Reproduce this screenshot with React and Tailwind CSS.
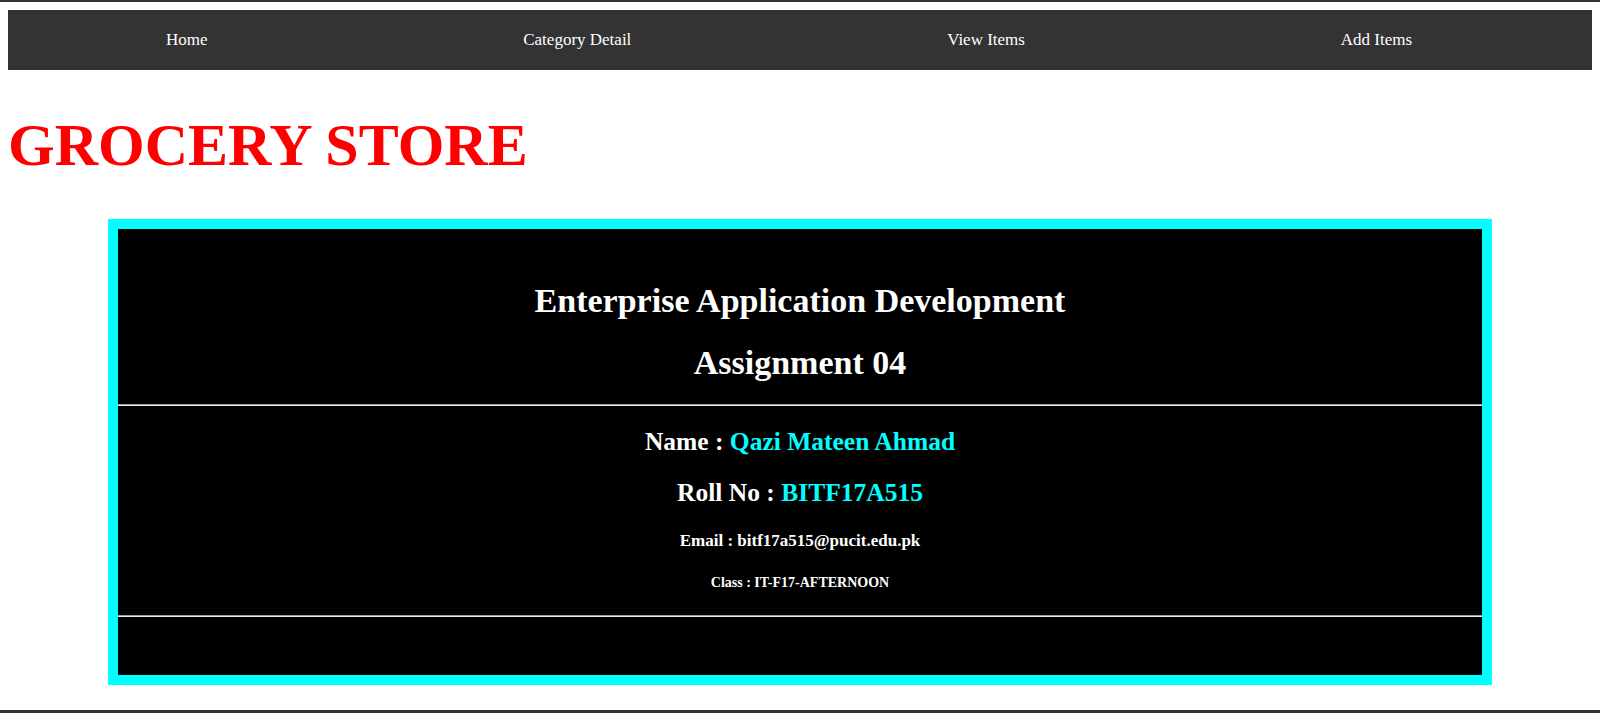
import React from "react";

const links = ["Home", "Category Detail", "View Items", "Add Items"];

const Divider = () => (
  <div className="h-0 border-t border-t-[#9a9a9a] border-b border-b-[#eeeeee]"></div>
);

const App = () => {
  return (
    <div className="flex flex-col h-screen bg-white font-['Liberation_Serif','Times_New_Roman',serif] leading-[1.15] overflow-hidden">
      <div className="h-[2px] bg-[#333333]"></div>

      <div className="flex-1 px-2 pt-2">
        {/* Nav */}
        <nav className="h-[60px] bg-[#333333]">
          <ul className="flex items-center justify-around h-full mr-[22px]">
            {links.map((link) => (
              <li key={link}>
                <a href="#" className="text-white text-[17px]">
                  {link}
                </a>
              </li>
            ))}
          </ul>
        </nav>

        <h1 className="mt-[41px] mb-[39px] text-[60px] font-bold text-[#ff0000]">
          GROCERY STORE
        </h1>

        {/* Info card */}
        <div className="mx-[100px] border-[10px] border-[#00ffff] bg-black text-white text-center font-bold">
          <div className="pt-[52px] pb-[22px]">
            <h2 className="text-[34px]">Enterprise Application Development</h2>
            <h2 className="mt-[23px] text-[34px]">Assignment 04</h2>
          </div>
          <Divider />
          <div className="pt-[21px] pb-[24px]">
            <h3 className="text-[25.5px]">
              Name : <span className="text-[#00ffff]">Qazi Mateen Ahmad</span>
            </h3>
            <h3 className="mt-[21px] text-[25.5px]">
              Roll No : <span className="text-[#00ffff]">BITF17A515</span>
            </h3>
            <h4 className="mt-[24px] text-[17px]">Email : bitf17a515@pucit.edu.pk</h4>
            <h5 className="mt-[25px] text-[14px]">Class : IT-F17-AFTERNOON</h5>
          </div>
          <Divider />
          <div className="h-[58px]"></div>
        </div>
      </div>

      <div className="h-[3px] bg-[#333333]"></div>
    </div>
  );
};

export default App;
